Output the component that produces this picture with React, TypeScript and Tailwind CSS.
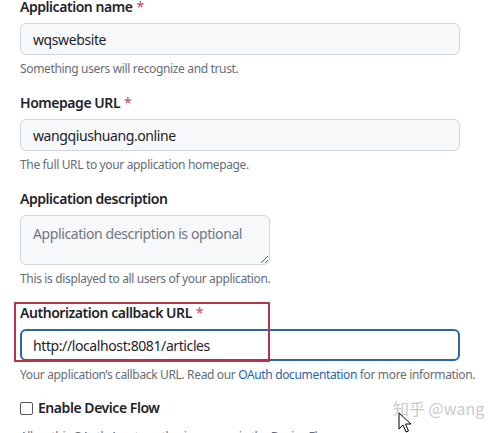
import { ReactNode } from "react";

const FONT = "font-['Noto_Sans','Liberation_Sans',sans-serif]";

function Label({ children, required }: { children: ReactNode; required?: boolean }) {
  return (
    <label className="block text-[14px] leading-5 font-semibold tracking-[-0.45px] text-[#1f2328] mb-[6px]">
      {children}
      {required && <span className="text-[#c4475a] font-normal ml-1">*</span>}
    </label>
  );
}

function Note({ children }: { children: ReactNode }) {
  return (
    <p className="mt-[5px] text-[12px] leading-[18px] tracking-[-0.35px] text-[#656d76] whitespace-nowrap">
      {children}
    </p>
  );
}

function Field({
  label,
  required,
  value,
  note,
}: {
  label: string;
  required?: boolean;
  value: string;
  note: ReactNode;
}) {
  return (
    <div className="mb-[15px]">
      <Label required={required}>{label}</Label>
      <input
        readOnly
        value={value}
        className="block w-[440px] h-8 px-3 text-[14px] tracking-[-0.4px] text-[#1f2328] bg-[#f6f8fa] border border-[#d0d7de] rounded-md outline-none"
      />
      <Note>{note}</Note>
    </div>
  );
}

export default function App() {
  return (
    <div className={`relative w-[491px] h-[433px] overflow-hidden bg-white ${FONT}`}>
      <div className="pl-5 -mt-[3px]">
        <Field
          label="Application name"
          required
          value="wqswebsite"
          note="Something users will recognize and trust."
        />
        <Field
          label="Homepage URL"
          required
          value="wangqiushuang.online"
          note="The full URL to your application homepage."
        />

        {/* Description */}
        <div className="mb-[15px]">
          <Label>Application description</Label>
          <textarea
            readOnly
            placeholder="Application description is optional"
            className="block w-[250px] h-[50px] px-3 py-2 text-[14px] leading-5 tracking-[-0.4px] bg-[#f6f8fa] border border-[#d0d7de] rounded-md outline-none placeholder:text-[#6e7781]"
          />
          <Note>This is displayed to all users of your application.</Note>
        </div>

        {/* Callback URL */}
        <div className="relative mb-[14px]">
          <Label required>Authorization callback URL</Label>
          <input
            readOnly
            value="http://localhost:8081/articles"
            className="block w-[440px] h-8 px-[11px] text-[14px] tracking-[-0.4px] text-[#1f2328] bg-white border-2 border-[#2a67a3] rounded-md outline-none"
          />
          <Note>
            Your application’s callback URL. Read our{" "}
            <a className="text-[#2b63a6]">OAuth documentation</a> for more information.
          </Note>
          <div className="absolute -left-[6px] -top-[1px] w-[256px] h-[60px] border-2 border-[#b5344a] pointer-events-none" />
        </div>

        {/* Device flow */}
        <div className="flex items-center gap-[5px] h-5">
          <span className="w-[13px] h-[13px] border border-[#555] rounded-[2px] bg-white" />
          <span className="text-[14px] leading-5 font-semibold tracking-[-0.45px] text-[#1f2328]">
            Enable Device Flow
          </span>
        </div>
        <p className="mt-[10px] text-[12px] leading-[18px] tracking-[-0.35px] text-[#656d76]">
          Allow this OAuth App to authorize users via the Device Flow.
        </p>
      </div>

      {/* watermark + cursor */}
      <div className="absolute left-[393px] top-[398px] text-[16px] leading-5 text-[#cacaca] font-['Noto_Sans_CJK_SC',sans-serif] whitespace-nowrap">
        知乎 @wang
      </div>
      <svg className="absolute left-[398px] top-[412px]" width="14" height="22" viewBox="0 0 14 22">
        <path
          d="M1 1 L1 17 L5 13 L8 20 L10.5 19 L7.5 12 L13 12 Z"
          fill="#fff"
          stroke="#000"
          strokeWidth="1"
          strokeLinejoin="round"
        />
      </svg>
    </div>
  );
}
